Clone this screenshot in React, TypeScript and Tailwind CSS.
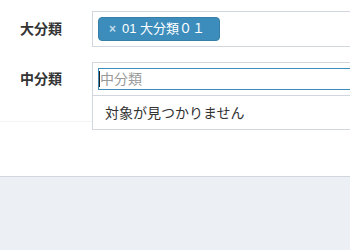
import React from "react";

export default function App() {
  const jp = { fontFamily: '"Liberation Sans", "Noto Sans CJK JP", sans-serif' };
  return (
    <div className="w-[350px] h-[250px] overflow-hidden bg-white text-[#333]" style={jp}>
      <div className="relative w-[420px]">
        <div className="h-[122px] border-b border-[#f4f4f4] pt-[11px]">
          <div className="flex items-center">
            <div className="w-[92px] pl-[20px] text-[14px] font-bold leading-[20px]">大分類</div>
            <div className="flex-1 h-[36px] border border-[#d2d6de] px-[5px] py-[5px] flex items-start">
              <div className="h-[24px] flex items-center rounded-[4px] border border-[#367fa9] bg-[#3c8dbc] pl-[10px] pr-[14px] text-white text-[13px] leading-[20px]">
                <span className="text-white/70 font-bold mr-[6px] text-[12px]">×</span>
                <span>01 大分類０１</span>
              </div>
            </div>
          </div>
          <div className="flex items-center mt-[15px]">
            <div className="w-[92px] pl-[20px] text-[14px] font-bold leading-[20px]">中分類</div>
            <div className="relative flex-1 h-[34px] border border-[#d2d6de] px-[5px] py-[5px]">
              <div className="relative h-[22px] border border-[#3c8dbc] flex items-center">
                <span className="absolute left-0 top-[2px] w-px h-[16px] bg-[#222]" />
                <span className="pl-[1px] text-[14px] leading-[20px] text-[#999]">中分類</span>
              </div>
              <div className="absolute left-[-1px] right-[-1px] top-[33px] h-[34px] bg-white border border-t-0 border-[#d2d6de] pl-[12px] flex items-center">
                <span className="text-[14px] leading-[20px] text-[#333]">対象が見つかりません</span>
              </div>
            </div>
          </div>
        </div>
        <div className="h-[54px]" />
        <div className="h-[80px] border-t border-[#d2d6de] bg-[#ecf0f5]" />
      </div>
    </div>
  );
}
